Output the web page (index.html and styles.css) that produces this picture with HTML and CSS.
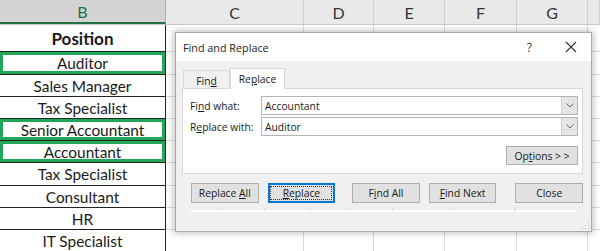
FILE: index.html
```html
<!DOCTYPE html>
<html>
<head>
<meta charset="utf-8">
<link rel="stylesheet" href="styles.css">
</head>
<body>
<div class="sheet">
  <div class="hdr-row">
    <div class="hdr colB sel">B</div>
    <div class="hdr colC">C</div>
    <div class="hdr colD">D</div>
    <div class="hdr colE">E</div>
    <div class="hdr colF">F</div>
    <div class="hdr colG">G</div>
    <div class="hdr colH"></div>
  </div>
  <div class="row r-title"><div class="cell colB bold">Position</div><div class="grid"></div></div>
  <div class="row r23"><div class="cell colB hl">Auditor</div><div class="grid"></div></div>
  <div class="row"><div class="cell colB">Sales Manager</div><div class="grid"></div></div>
  <div class="row"><div class="cell colB">Tax Specialist</div><div class="grid"></div></div>
  <div class="row"><div class="cell colB hl">Senior Accountant</div><div class="grid"></div></div>
  <div class="row"><div class="cell colB hl">Accountant</div><div class="grid"></div></div>
  <div class="row r23"><div class="cell colB">Tax Specialist</div><div class="grid"></div></div>
  <div class="row"><div class="cell colB">Consultant</div><div class="grid"></div></div>
  <div class="row"><div class="cell colB">HR</div><div class="grid"></div></div>
  <div class="row"><div class="cell colB">IT Specialist</div><div class="grid"></div></div>
</div>

<div class="dialog">
  <div class="titlebar">
    <span class="title">Find and Replace</span>
    <span class="tb-btns">
      <span class="help">?</span>
      <svg class="close-x" width="12" height="12" viewBox="0 0 12 12"><path d="M1 1 L11 11 M11 1 L1 11" stroke="#333" stroke-width="1.1" fill="none"/></svg>
    </span>
  </div>
  <div class="dbody">
    <div class="tabs">
      <div class="tab"><span>Fin<u>d</u></span></div>
      <div class="tab active"><span>Re<u>p</u>lace</span></div>
    </div>
    <div class="panel">
      <div class="field">
        <label>Fi<u>n</u>d what:</label>
        <div class="combo"><span class="val">Accountant</span><span class="drop"><svg width="8" height="5" viewBox="0 0 8 5"><path d="M0.5 0.5 L4 4 L7.5 0.5" stroke="#666" fill="none"/></svg></span></div>
      </div>
      <div class="field">
        <label>R<u>e</u>place with:</label>
        <div class="combo"><span class="val">Auditor</span><span class="drop"><svg width="8" height="5" viewBox="0 0 8 5"><path d="M0.5 0.5 L4 4 L7.5 0.5" stroke="#666" fill="none"/></svg></span></div>
      </div>
      <div class="opt-row"><button class="btn opt"><span>Op<u>t</u>ions &gt; &gt;</span></button></div>
    </div>
    <div class="buttons">
      <button class="btn"><span>Replace <u>A</u>ll</span></button>
      <button class="btn focus"><span class="focus-in"><span><u>R</u>eplace</span></span></button>
      <button class="btn gap"><span>F<u>i</u>nd All</span></button>
      <button class="btn"><span><u>F</u>ind Next</span></button>
      <button class="btn gap"><span>Close</span></button>
    </div>
    <div class="listhead">
      <span style="width:28px"></span><span style="width:45px"></span><span style="width:45px"></span><span style="width:35px"></span><span style="width:45px"></span><span style="width:60px"></span><span style="width:60px"></span><span></span>
    </div>
    <div class="grip"></div>
  </div>
</div>
</body>
</html>
```

FILE: styles.css
```css
html, body {
  margin: 0;
  padding: 0;
}
body {
  width: 600px;
  height: 251px;
  overflow: hidden;
  background: #fff;
  position: relative;
  font-family: "Lato", "Open Sans", sans-serif;
}
.sheet {
  display: flex;
  flex-direction: column;
}
.hdr-row {
  display: flex;
  height: 24px;
  background: #e9e9e9;
  border-bottom: 1px solid #c8c8c8;
}
.hdr {
  box-sizing: border-box;
  border-right: 1px solid #cfcfcf;
  display: flex;
  align-items: center;
  justify-content: center;
  font-size: 16px;
  color: #333;
  font-family: "Lato", sans-serif;
}
.hdr.sel {
  background: #d3d3d3;
  color: #217346;
  border-bottom: 2px solid #217346;
  border-right: 1px solid #b0b0b0;
}
.colB { width: 166px; flex: none; }
.colC { width: 138px; }
.colD { width: 70px; }
.colE { width: 71px; }
.colF { width: 72px; }
.colG { width: 71px; }
.colH { flex: 1; }

.row {
  display: flex;
  height: 22px;
}
.row.r23 { height: 23px; }
.row.r-title { height: 27px; }
.cell {
  box-sizing: border-box;
  border-right: 1px solid #222;
  border-bottom: 1px solid #222;
  display: flex;
  align-items: center;
  justify-content: center;
  font-size: 15.4px;
  color: #1a1a1a;
  background: #fff;
}
.cell.bold {
  font-weight: bold;
  font-size: 17px;
}
.cell.hl {
  box-shadow: inset 0 0 0 3px #22a75a;
}
.grid {
  flex: 1;
  border-bottom: 1px solid #dadada;
  background-image: linear-gradient(to right, transparent 137px, #dadada 137px, #dadada 138px, transparent 138px),
                    linear-gradient(to right, transparent 207px, #dadada 207px, #dadada 208px, transparent 208px),
                    linear-gradient(to right, transparent 278px, #dadada 278px, #dadada 279px, transparent 279px),
                    linear-gradient(to right, transparent 350px, #dadada 350px, #dadada 351px, transparent 351px),
                    linear-gradient(to right, transparent 421px, #dadada 421px, #dadada 422px, transparent 422px);
}

/* dialog */
.dialog {
  position: absolute;
  left: 175px;
  top: 32px;
  width: 417px;
  height: 200px;
  box-sizing: border-box;
  border: 1px solid #a9a9a9;
  background: #f0f0f0;
  box-shadow: 0 0 7px 1px rgba(0,0,0,0.28);
  font-family: "Open Sans", "Noto Sans", sans-serif;
  font-size: 10.3px;
  color: #1a1a1a;
  display: flex;
  flex-direction: column;
}
.titlebar {
  height: 28px;
  background: #fff;
  display: flex;
  align-items: center;
  justify-content: space-between;
  padding: 0 14px 0 7px;
  flex: none;
}
.title {
  font-size: 10.8px;
  color: #222;
}
.tb-btns {
  display: flex;
  align-items: center;
  gap: 31px;
}
.help {
  font-size: 12px;
  color: #333;
  margin-right: 2px;
}
.dbody {
  flex: 1;
  position: relative;
  padding: 6px 8px 0 6px;
  display: flex;
  flex-direction: column;
}
.tabs {
  display: flex;
  align-items: flex-end;
  height: 21px;
  padding-left: 1px;
}
.tab {
  height: 18px;
  width: 47px;
  box-sizing: border-box;
  display: flex;
  align-items: center;
  justify-content: center;
  border: 1px solid #d9d9d9;
  border-bottom: none;
  background: #f0f0f0;
  padding-top: 2px;
}
.tab.active {
  height: 21px;
  width: 55px;
  background: #fff;
  padding-top: 0;
  margin-bottom: -1px;
  position: relative;
}
.panel {
  background: #fff;
  border: 1px solid #d9d9d9;
  height: 86px;
  box-sizing: border-box;
  padding: 7px 4px 0 7px;
  display: flex;
  flex-direction: column;
  gap: 2px;
}
.field {
  display: flex;
  align-items: center;
  height: 19px;
}
.field label {
  width: 71px;
  flex: none;
}
.combo {
  flex: 1;
  height: 19px;
  box-sizing: border-box;
  border: 1px solid #b4b4b4;
  display: flex;
  align-items: center;
  justify-content: space-between;
  background: #fff;
}
.val {
  padding-left: 3px;
}
.drop {
  width: 15px;
  height: 17px;
  background: #e5e5e5;
  border-left: 1px solid #d0d0d0;
  display: flex;
  align-items: center;
  justify-content: center;
}
.opt-row {
  display: flex;
  justify-content: flex-end;
  margin-top: 8px;
}
.btn {
  font-family: inherit;
  font-size: 10.3px;
  color: #1a1a1a;
  background: #e1e1e1;
  border: 1px solid #adadad;
  height: 20px;
  width: 68px;
  padding: 0;
  margin: 0;
  display: flex;
  align-items: center;
  justify-content: center;
  box-sizing: border-box;
}
.btn.opt {
  width: 72px;
  height: 19px;
}
.buttons {
  display: flex;
  margin-top: 9px;
  padding-left: 9px;
  gap: 9px;
}
.buttons .gap { margin-left: 8px; }
.buttons .btn:last-child { margin-left: 10px; }
.btn.focus {
  border: 2px solid #0078d7;
}
.focus-in {
  border: 1px dotted #333;
  width: 60px;
  height: 12px;
  display: flex;
  align-items: center;
  justify-content: center;
}
.listhead {
  margin: 7px 0 0 8px;
  width: 386px;
  height: 2px;
  background: #fff;
  display: flex;
}
.listhead span {
  border-right: 1px solid #e2e2e2;
  height: 4px;
  margin-top: -3px;
  flex: none;
}
.grip {
  position: absolute;
  right: 2px;
  bottom: 2px;
  width: 8px;
  height: 8px;
  background-image: radial-gradient(circle, #b8b8b8 0.8px, transparent 1px);
  background-size: 3px 3px;
  clip-path: polygon(100% 0, 100% 100%, 0 100%);
}
```
